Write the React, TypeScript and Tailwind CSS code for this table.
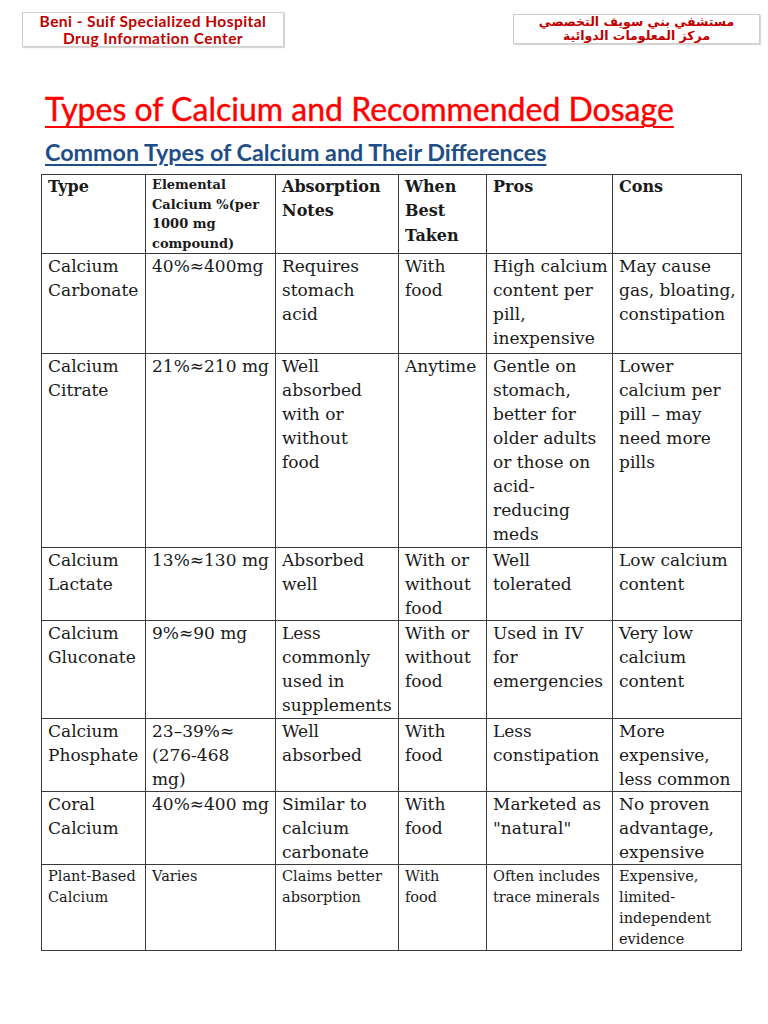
import React from "react";

type Row = { h: string; cells: string[][]; small?: boolean };

const cols = ["w-[104px]", "w-[130px]", "w-[123px]", "w-[88px]", "w-[126px]", "w-[129px]"];

const head: { lines: string[]; small?: boolean }[] = [
  { lines: ["Type"] },
  { lines: ["Elemental", "Calcium %(per", "1000 mg", "compound)"], small: true },
  { lines: ["Absorption", "Notes"] },
  { lines: ["When", "Best", "Taken"] },
  { lines: ["Pros"] },
  { lines: ["Cons"] },
];

// line breaks follow the source document
const rows: Row[] = [
  {
    h: "h-[100px]",
    cells: [
      ["Calcium", "Carbonate"],
      ["40%≈400mg"],
      ["Requires", "stomach", "acid"],
      ["With", "food"],
      ["High calcium", "content per", "pill,", "inexpensive"],
      ["May cause", "gas, bloating,", "constipation"],
    ],
  },
  {
    h: "h-[194px]",
    cells: [
      ["Calcium", "Citrate"],
      ["21%≈210 mg"],
      ["Well", "absorbed", "with or", "without", "food"],
      ["Anytime"],
      ["Gentle on", "stomach,", "better for", "older adults", "or those on", "acid-", "reducing", "meds"],
      ["Lower", "calcium per", "pill – may", "need more", "pills"],
    ],
  },
  {
    h: "h-[73px]",
    cells: [
      ["Calcium", "Lactate"],
      ["13%≈130 mg"],
      ["Absorbed", "well"],
      ["With or", "without", "food"],
      ["Well", "tolerated"],
      ["Low calcium", "content"],
    ],
  },
  {
    h: "h-[98px]",
    cells: [
      ["Calcium", "Gluconate"],
      ["9%≈90 mg"],
      ["Less", "commonly", "used in", "supplements"],
      ["With or", "without", "food"],
      ["Used in IV", "for", "emergencies"],
      ["Very low", "calcium", "content"],
    ],
  },
  {
    h: "h-[73px]",
    cells: [
      ["Calcium", "Phosphate"],
      ["23–39%≈", "(276-468", "mg)"],
      ["Well", "absorbed"],
      ["With", "food"],
      ["Less", "constipation"],
      ["More", "expensive,", "less common"],
    ],
  },
  {
    h: "h-[73px]",
    cells: [
      ["Coral", "Calcium"],
      ["40%≈400 mg"],
      ["Similar to", "calcium", "carbonate"],
      ["With", "food"],
      ["Marketed as", "\"natural\""],
      ["No proven", "advantage,", "expensive"],
    ],
  },
  {
    h: "h-[86px]",
    small: true,
    cells: [
      ["Plant-Based", "Calcium"],
      ["Varies"],
      ["Claims better", "absorption"],
      ["With", "food"],
      ["Often includes", "trace minerals"],
      ["Expensive,", "limited-", "independent", "evidence"],
    ],
  },
];

export default function App() {
  return (
    <div className="w-[768px] h-[1024px] bg-white overflow-hidden">
      <div className="flex justify-between items-start pt-3 pl-[22px] pr-2">
        <div className="w-[262px] h-[35px] border border-[#cfcfcf] shadow-[1px_1px_1px_#d8d8d8] flex flex-col items-center justify-center text-[#c00000] font-bold text-[15.5px] leading-[16.5px] tracking-[0.45px] [font-family:Lato,sans-serif]">
          <span>Beni - Suif Specialized Hospital</span>
          <span>Drug Information Center</span>
        </div>
        <div
          dir="rtl"
          className="mt-[2px] w-[247px] h-[30px] border border-[#cfcfcf] shadow-[1px_1px_1px_#d8d8d8] flex flex-col items-center justify-center text-[#c00000] font-bold text-[12.5px] leading-[14px] [font-family:'DejaVu_Sans',sans-serif]"
        >
          <span>مستشفي بني سويف التخصصي</span>
          <span>مركز المعلومات الدوائية</span>
        </div>
      </div>

      <h1 className="mt-[44px] ml-[45px] text-[#ff0000] text-[32px] leading-[36px] underline decoration-2 underline-offset-[5px] [font-family:Lato,sans-serif] [-webkit-text-stroke:0.4px_#ff0000]">
        Types of Calcium and Recommended Dosage
      </h1>
      <h2 className="mt-[12px] ml-[45px] text-[#1f4e86] font-bold text-[23.3px] leading-[26px] underline decoration-[1.5px] underline-offset-[3px] [font-family:Lato,sans-serif]">
        Common Types of Calcium and Their Differences
      </h2>

      <table className="mt-[9px] ml-[41px] table-fixed border-collapse text-[#1a1a1a] [font-family:'DejaVu_Serif',serif]">
        <colgroup>
          {cols.map((c, i) => (
            <col key={i} className={c} />
          ))}
        </colgroup>
        <thead>
          <tr className="h-[79px] align-top">
            {head.map((c, i) => (
              <th
                key={i}
                className={`border-[1.5px] border-[#3a3a3a] pl-[6px] pr-[2px] text-left font-bold ${
                  c.small ? "pt-0 text-[13px] leading-[19.5px]" : "pt-0 text-[16px] leading-[24.4px]"
                }`}
              >
                {c.lines.map((l, k) => (
                  <div key={k} className="whitespace-nowrap">
                    {l}
                  </div>
                ))}
              </th>
            ))}
          </tr>
        </thead>
        <tbody>
          {rows.map((r, i) => (
            <tr key={i} className={`${r.h} align-top`}>
              {r.cells.map((c, j) => (
                <td
                  key={j}
                  className={`border-[1.5px] border-[#3a3a3a] pl-[6px] pr-[2px] ${
                    r.small ? "pt-[1px] text-[14.5px] leading-[21px]" : "pt-0 text-[17px] leading-[24px]"
                  }`}
                >
                  {c.map((l, k) => (
                    <div key={k} className="whitespace-nowrap">
                      {l}
                    </div>
                  ))}
                </td>
              ))}
            </tr>
          ))}
        </tbody>
      </table>
    </div>
  );
}
